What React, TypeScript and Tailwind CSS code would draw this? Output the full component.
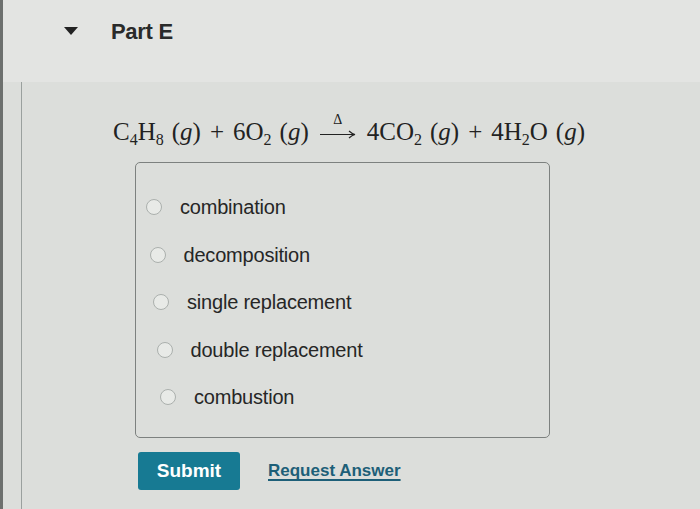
import React from 'react'

const options = ['combination', 'decomposition', 'single replacement', 'double replacement', 'combustion']

function Sub({ children }: { children: React.ReactNode }) {
  return <span className="text-[16px] relative top-[5px] leading-none">{children}</span>
}

function G() {
  return (
    <span className="ml-[8px]">
      (<i>g</i>)
    </span>
  )
}

function Plus() {
  return <span className="mx-[9px]">+</span>
}

function Arrow() {
  return (
    <span className="inline-flex flex-col items-center mx-[11px] relative top-[-5px]">
      <span className="text-[14px] leading-none mb-[3px]">Δ</span>
      <svg width="36" height="9" viewBox="0 0 36 9">
        <path d="M0 4.5 H34" stroke="#222" strokeWidth="1.2" />
        <path d="M29 1 Q32 3.8 35 4.5 Q32 5.2 29 8" stroke="#222" strokeWidth="1.1" fill="none" />
      </svg>
    </span>
  )
}

export default function App() {
  return (
    <div className="w-[700px] h-[509px] overflow-hidden bg-[#dcdedb] flex" style={{ fontFamily: '"Liberation Sans", Arial, sans-serif' }}>
      <div className="w-[3px] bg-[#6d706e]" />
      <div className="flex-1 flex flex-col">
        <div className="h-[82px] bg-[#e3e4e2] flex items-start pt-[15px] pl-[60px] gap-[32px]">
          <svg width="16" height="10" viewBox="0 0 16 10" className="mt-[11px]">
            <path d="M1 1 L15 1 L8 9 Z" fill="#222" />
          </svg>
          <span className="text-[22px] font-bold text-[#2a2a2a] tracking-[-0.3px]">Part E</span>
        </div>
        <div className="flex-1 border-l-[1.5px] border-[#9aa09e] ml-[18px] pl-[91px] pt-[34px]">
          <div
            className="text-[25px] text-[#222] whitespace-nowrap flex items-end leading-none h-[28px]"
            style={{ fontFamily: '"Liberation Serif", "Times New Roman", serif' }}
          >
            <span>
              C<Sub>4</Sub>H<Sub>8</Sub>
              <G />
              <Plus />
              6O<Sub>2</Sub>
              <G />
            </span>
            <Arrow />
            <span>
              4CO<Sub>2</Sub>
              <G />
              <Plus />
              4H<Sub>2</Sub>O
              <G />
            </span>
          </div>
          <div className="mt-[18px] ml-[22px] w-[415px] h-[276px] border-[1.5px] border-[#7d817f] rounded-[5px] pt-[33px] pl-[10px] flex flex-col gap-[25.5px]">
            {options.map((o, i) => (
              <div key={o} className="flex items-center h-[22px]" style={{ paddingLeft: i * 3.5 }}>
                <span className="w-[16px] h-[16px] rounded-full border-[1.5px] border-[#abb0ad] bg-[#e8eae7]" />
                <span className="ml-[18px] text-[20px] text-[#262626] tracking-[-0.2px]">{o}</span>
              </div>
            ))}
          </div>
          <div className="mt-[14px] ml-[25px] flex items-center gap-[28px]">
            <button className="w-[102px] h-[38px] bg-[#177a93] rounded-[3px] text-white text-[19px] font-bold">
              Submit
            </button>
            <span className="text-[17px] font-bold text-[#1d5f78] underline underline-offset-[3px] decoration-[1.5px]">
              Request Answer
            </span>
          </div>
        </div>
      </div>
    </div>
  )
}
